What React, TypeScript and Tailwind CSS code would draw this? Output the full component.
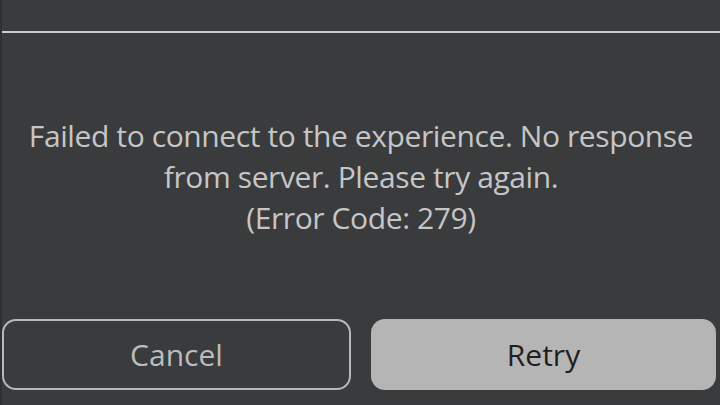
import React from "react";

export default function App() {
  const font = { fontFamily: '"Open Sans", "Noto Sans", sans-serif' };
  return (
    <div className="w-[720px] h-[405px] bg-[#393b3d] flex flex-col overflow-hidden border-l-2 border-[#2e3032]" style={font}>
      <div className="h-[31px]" />
      <div className="h-[2px] bg-[#cdcdcd]" />
      <div className="h-[82px]" />
      <div className="text-[30px] leading-[41px] text-[#c6c6c6] text-center tracking-[-0.4px]">
        <div>Failed to connect to the experience. No response</div>
        <div>from server. Please try again.</div>
        <div>(Error Code: 279)</div>
      </div>
      <div className="flex-1" />
      <div className="flex gap-[20px] pb-[15px] pr-[4px]">
        <button className="w-[349px] h-[71px] rounded-[14px] border-2 border-[#b8b8b8] text-[30px] text-[#bdbdbd]">Cancel</button>
        <button className="flex-1 h-[71px] rounded-[14px] bg-[#b5b5b5] text-[30px] text-[#1f1f1f]">Retry</button>
      </div>
    </div>
  );
}
